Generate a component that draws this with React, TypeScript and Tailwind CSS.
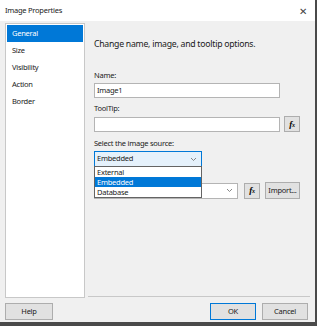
import React from 'react';

const font = "font-['Noto_Sans','Open_Sans',sans-serif]";

function FxButton() {
  return (
    <div className="w-[16px] h-[16px] border border-[#adadad] bg-[#e1e1e1] flex items-center justify-center">
      <span className="font-['Liberation_Serif',serif] italic font-bold text-[9px] leading-none text-black">
        f<span className="text-[6px]">x</span>
      </span>
    </div>
  );
}

export default function App() {
  const navItems = ['General', 'Size', 'Visibility', 'Action', 'Border'];

  return (
    <div className={`w-[317px] h-[326px] bg-[#f0f0f0] border-r-2 border-b-4 border-[#4a4a4a] flex flex-col text-[#1a1a1a] tracking-[-0.25px] ${font}`}>
      {/* Title bar */}
      <div className="h-[21px] bg-white flex items-center justify-between pl-[5px] pr-[8px] shrink-0">
        <span className="text-[7.5px] leading-none">Image Properties</span>
        <span className="text-[10px] leading-none text-[#444]">✕</span>
      </div>

      <div className="flex flex-1 pt-[2px] pl-[5px] pr-[3px]">
        {/* Left nav */}
        <div className="w-[80px] h-[275px] bg-white border border-[#c8c8c8] pt-[1px] px-[1px] shrink-0">
          {navItems.map((item, i) => (
            <div
              key={item}
              className={`h-[17px] flex items-center pl-[5px] text-[7.5px] ${i === 0 ? 'bg-[#0078d7] text-white' : 'text-[#1a1a1a]'}`}
            >
              {item}
            </div>
          ))}
        </div>

        {/* Content */}
        <div className="flex-1 flex flex-col pl-[9px] relative">
          <div className="mt-[15px] text-[8.7px] leading-[13px]">Change name, image, and tooltip options.</div>

          <div className="mt-[19px] text-[7.5px] leading-[11px]">Name:</div>
          <div className="mt-[2px] w-[186px] h-[15px] bg-white border border-[#b4b4b4] flex items-center pl-[2px] text-[7.5px]">
            Image1
          </div>

          <div className="mt-[5px] text-[7.5px] leading-[11px]">ToolTip:</div>
          <div className="mt-[2px] flex items-center gap-[4px]">
            <div className="w-[186px] h-[15px] bg-white border border-[#b4b4b4]" />
            <FxButton />
          </div>

          <div className="mt-[6px] text-[7.5px] leading-[11px]">Select the image source:</div>
          <div className="mt-[2px] w-[108px] h-[16px] bg-[#e5f1fb] border border-[#0078d7] flex items-center justify-between pl-[2px] pr-[4px] text-[7.5px]">
            <span>Embedded</span>
            <svg width="7" height="5" viewBox="0 0 7 5">
              <path d="M1 1 L3.5 3.5 L6 1" stroke="#7a7a7a" fill="none" strokeWidth="0.9" />
            </svg>
          </div>

          <div className="mt-[15px] flex items-center">
            <div className="w-[144px] h-[16px] bg-white border border-[#b4b4b4] flex items-center justify-end pr-[4px]">
              <svg width="7" height="5" viewBox="0 0 7 5">
                <path d="M1 1 L3.5 3.5 L6 1" stroke="#7a7a7a" fill="none" strokeWidth="0.9" />
              </svg>
            </div>
            <div className="ml-[6px]">
              <FxButton />
            </div>
            <div className="ml-[5px] w-[35px] h-[17px] border border-[#adadad] bg-[#e1e1e1] flex items-center justify-center text-[7.5px]">
              Import...
            </div>
          </div>

          {/* Open dropdown list */}
          <div className="absolute left-[9px] top-[143px] w-[108px] bg-white border border-[#646464] text-[7.5px] leading-[10px]">
            <div className="pl-[2px] h-[10px] flex items-center">External</div>
            <div className="pl-[2px] h-[10px] flex items-center bg-[#0078d7] text-white">Embedded</div>
            <div className="pl-[2px] h-[10px] flex items-center">Database</div>
          </div>

          <div className="flex-1" />
        </div>
      </div>

      {/* Separator + buttons */}
      <div className="flex pl-[88px] pr-[5px] -mt-[2px]">
        <div className="flex-1 h-px bg-[#c8c8c8]" />
      </div>
      <div className="flex items-center justify-between pl-[5px] pr-[7px] pt-[6px] pb-[2px]">
        <div className="w-[48px] h-[17px] border border-[#adadad] bg-[#e1e1e1] flex items-center justify-center text-[7.5px]">Help</div>
        <div className="flex gap-[6px]">
          <div className="w-[46px] h-[17px] border border-[#0078d7] bg-[#e1e1e1] flex items-center justify-center text-[7.5px]">OK</div>
          <div className="w-[46px] h-[17px] border border-[#adadad] bg-[#e1e1e1] flex items-center justify-center text-[7.5px]">Cancel</div>
        </div>
      </div>
    </div>
  );
}
